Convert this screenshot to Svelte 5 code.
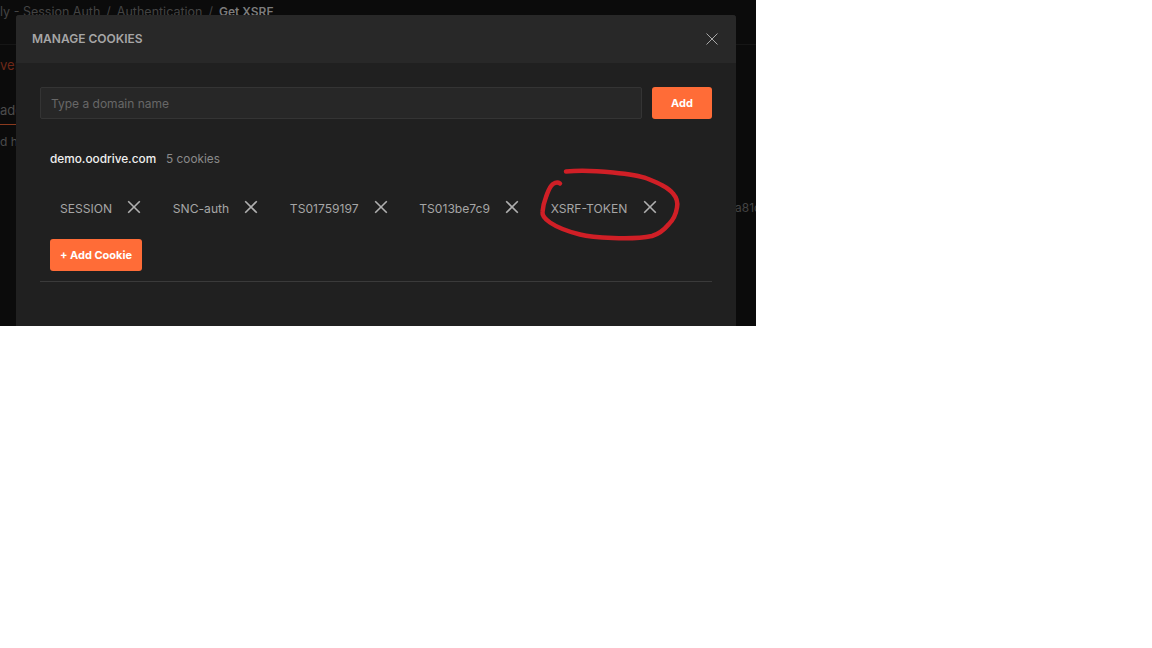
<script>
	const cookies = ["SESSION", "SNC-auth", "TS01759197", "TS013be7c9", "XSRF-TOKEN"];
</script>

<main class="shot">
	<div class="crumbs">
		<span>ly - Session Auth</span><span class="sep">/</span><span>Authentication</span><span class="sep">/</span><b>Get XSRF</b>
	</div>
	<div class="bg-row red">ver</div>
	<div class="bg-row tab">ade</div>
	<div class="bg-row hint">d h</div>
	<div class="bg-value">a81c</div>

	<section class="modal">
		<header>
			<h1>MANAGE COOKIES</h1>
			<svg class="close" width="14" height="14" viewBox="0 0 14 14"><path d="M1.5 1.5l11 11M12.5 1.5l-11 11" /></svg>
		</header>
		<div class="body">
			<div class="domain-row">
				<input placeholder="Type a domain name" />
				<button class="add">Add</button>
			</div>
			<div class="domain">
				<strong>demo.oodrive.com</strong>
				<span>5 cookies</span>
			</div>
			<div class="chips">
				{#each cookies as name}
					<div class="chip">
						<span>{name}</span>
						<svg width="14" height="14" viewBox="0 0 14 14"><path d="M1.2 1.2l11.6 11.6M12.8 1.2l-11.6 11.6" /></svg>
					</div>
				{/each}
			</div>
			<button class="add add-cookie">+ Add Cookie</button>
			<hr />
		</div>
	</section>

	<!-- hand drawn circle round the last cookie -->
	<svg class="scribble" width="756" height="326" viewBox="0 0 756 326">
		<path d="M566 171.500C582 170 598 171 613 172.500C628 174 638 175 647 178.500C658 183 668 187 673 193.500C677 198 678 202 677 207.500C676 214 674 219 669 224C664 230 659 234 652 236C640 238.500 626 238.500 613 238C600 237.500 590 237 580 234.500C568 231.500 558 228 550 222.500C545 219 542 216 542.500 212C543 207 544 202 546 197C548 192 549 187 553 184C556 182 558 182 560 183.500" />
	</svg>
</main>

<style>
	:global(body) {
		background: #fff;
		font-family: Inter, "Liberation Sans", sans-serif;
	}
	.shot {
		position: relative;
		width: 756px;
		height: 326px;
		overflow: hidden;
		background: #0b0b0b;
		color: #6a6a6a;
		font-size: 13px;
	}
	.crumbs {
		display: flex;
		gap: 6px;
		height: 45px;
		padding-top: 4px;
		font-size: 12.5px;
		line-height: 16px;
		white-space: nowrap;
		box-sizing: border-box;
		color: #444;
		border-bottom: 1px solid #161616;
	}
	.crumbs b {
		color: #7c7c7c;
		font-size: 12px;
		font-weight: 600;
	}
	.bg-row {
		width: 16px;
		overflow: hidden;
		white-space: nowrap;
		color: #4c4c4c;
	}
	.red {
		margin-top: 12px;
		height: 29px;
		color: #6e2818;
		line-height: 16px;
	}
	.tab {
		height: 39px;
		line-height: 48px;
		box-sizing: border-box;
		border-bottom: 1px solid #8a3a1e;
	}
	.hint {
		margin-top: 9px;
		font-size: 12px;
	}
	.bg-value {
		position: absolute;
		left: 735px;
		top: 200px;
		color: #444;
		font-size: 12px;
		line-height: 16px;
		width: 21px;
		overflow: hidden;
	}
	.modal {
		position: absolute;
		left: 16px;
		top: 15px;
		width: 720px;
		height: 330px;
		background: #202020;
		border-radius: 3px;
	}
	header {
		display: flex;
		justify-content: space-between;
		align-items: center;
		height: 48px;
		padding: 0 17px 0 16px;
		background: #282828;
		border-radius: 3px 3px 0 0;
	}
	h1 {
		margin: -2px 0 0;
		font-size: 12px;
		font-weight: 600;
		color: #a6a6a6;
	}
	svg path {
		fill: none;
	}
	.close path {
		stroke: #a8a8a8;
		stroke-width: 1;
	}
	.body {
		padding: 24px 24px 0;
	}
	.domain-row {
		display: flex;
		gap: 10px;
	}
	input {
		flex: 1;
		min-width: 0;
		height: 32px;
		padding: 0 10px;
		box-sizing: border-box;
		background: #272727;
		border: 1px solid #343434;
		border-radius: 2px;
		outline: none;
		font: inherit;
		font-size: 12px;
	}
	input::placeholder {
		color: #686868;
		opacity: 1;
	}
	.add {
		width: 60px;
		height: 32px;
		border: 0;
		border-radius: 3px;
		background: #ff6c37;
		color: #fff;
		font: inherit;
		font-size: 11px;
		font-weight: 700;
		padding: 0;
	}
	.domain {
		display: flex;
		gap: 10px;
		align-items: baseline;
		margin: 32px 0 0 10px;
		font-size: 12px;
		line-height: 16px;
	}
	.domain strong {
		color: #f0f0f0;
		font-size: 11.8px;
		font-weight: 500;
	}
	.domain span {
		color: #8a8a8a;
		font-size: 11.8px;
	}
	.chips {
		display: flex;
		gap: 31px;
		margin: 33px 0 0 20px;
		height: 33px;
	}
	.chip {
		display: flex;
		align-items: center;
		gap: 15.700px;
		height: 16px;
		font-size: 12.100px;
		color: #a6a6a6;
	}
	.chip svg {
		position: relative;
		top: -1px;
		left: -0.500px;
	}
	.chip path {
		stroke: #b0b0b0;
		stroke-width: 1.6;
	}
	.add-cookie {
		display: block;
		width: 92px;
		margin: 6px 0 0 10px;
	}
	hr {
		margin: 10px 0 0;
		border: 0;
		border-top: 1px solid #3a3a3a;
	}
	.scribble {
		position: absolute;
		left: 0;
		top: 0;
	}
	.scribble path {
		stroke: #d01f26;
		stroke-width: 4.500;
		stroke-linecap: round;
		stroke-linejoin: round;
	}
</style>
